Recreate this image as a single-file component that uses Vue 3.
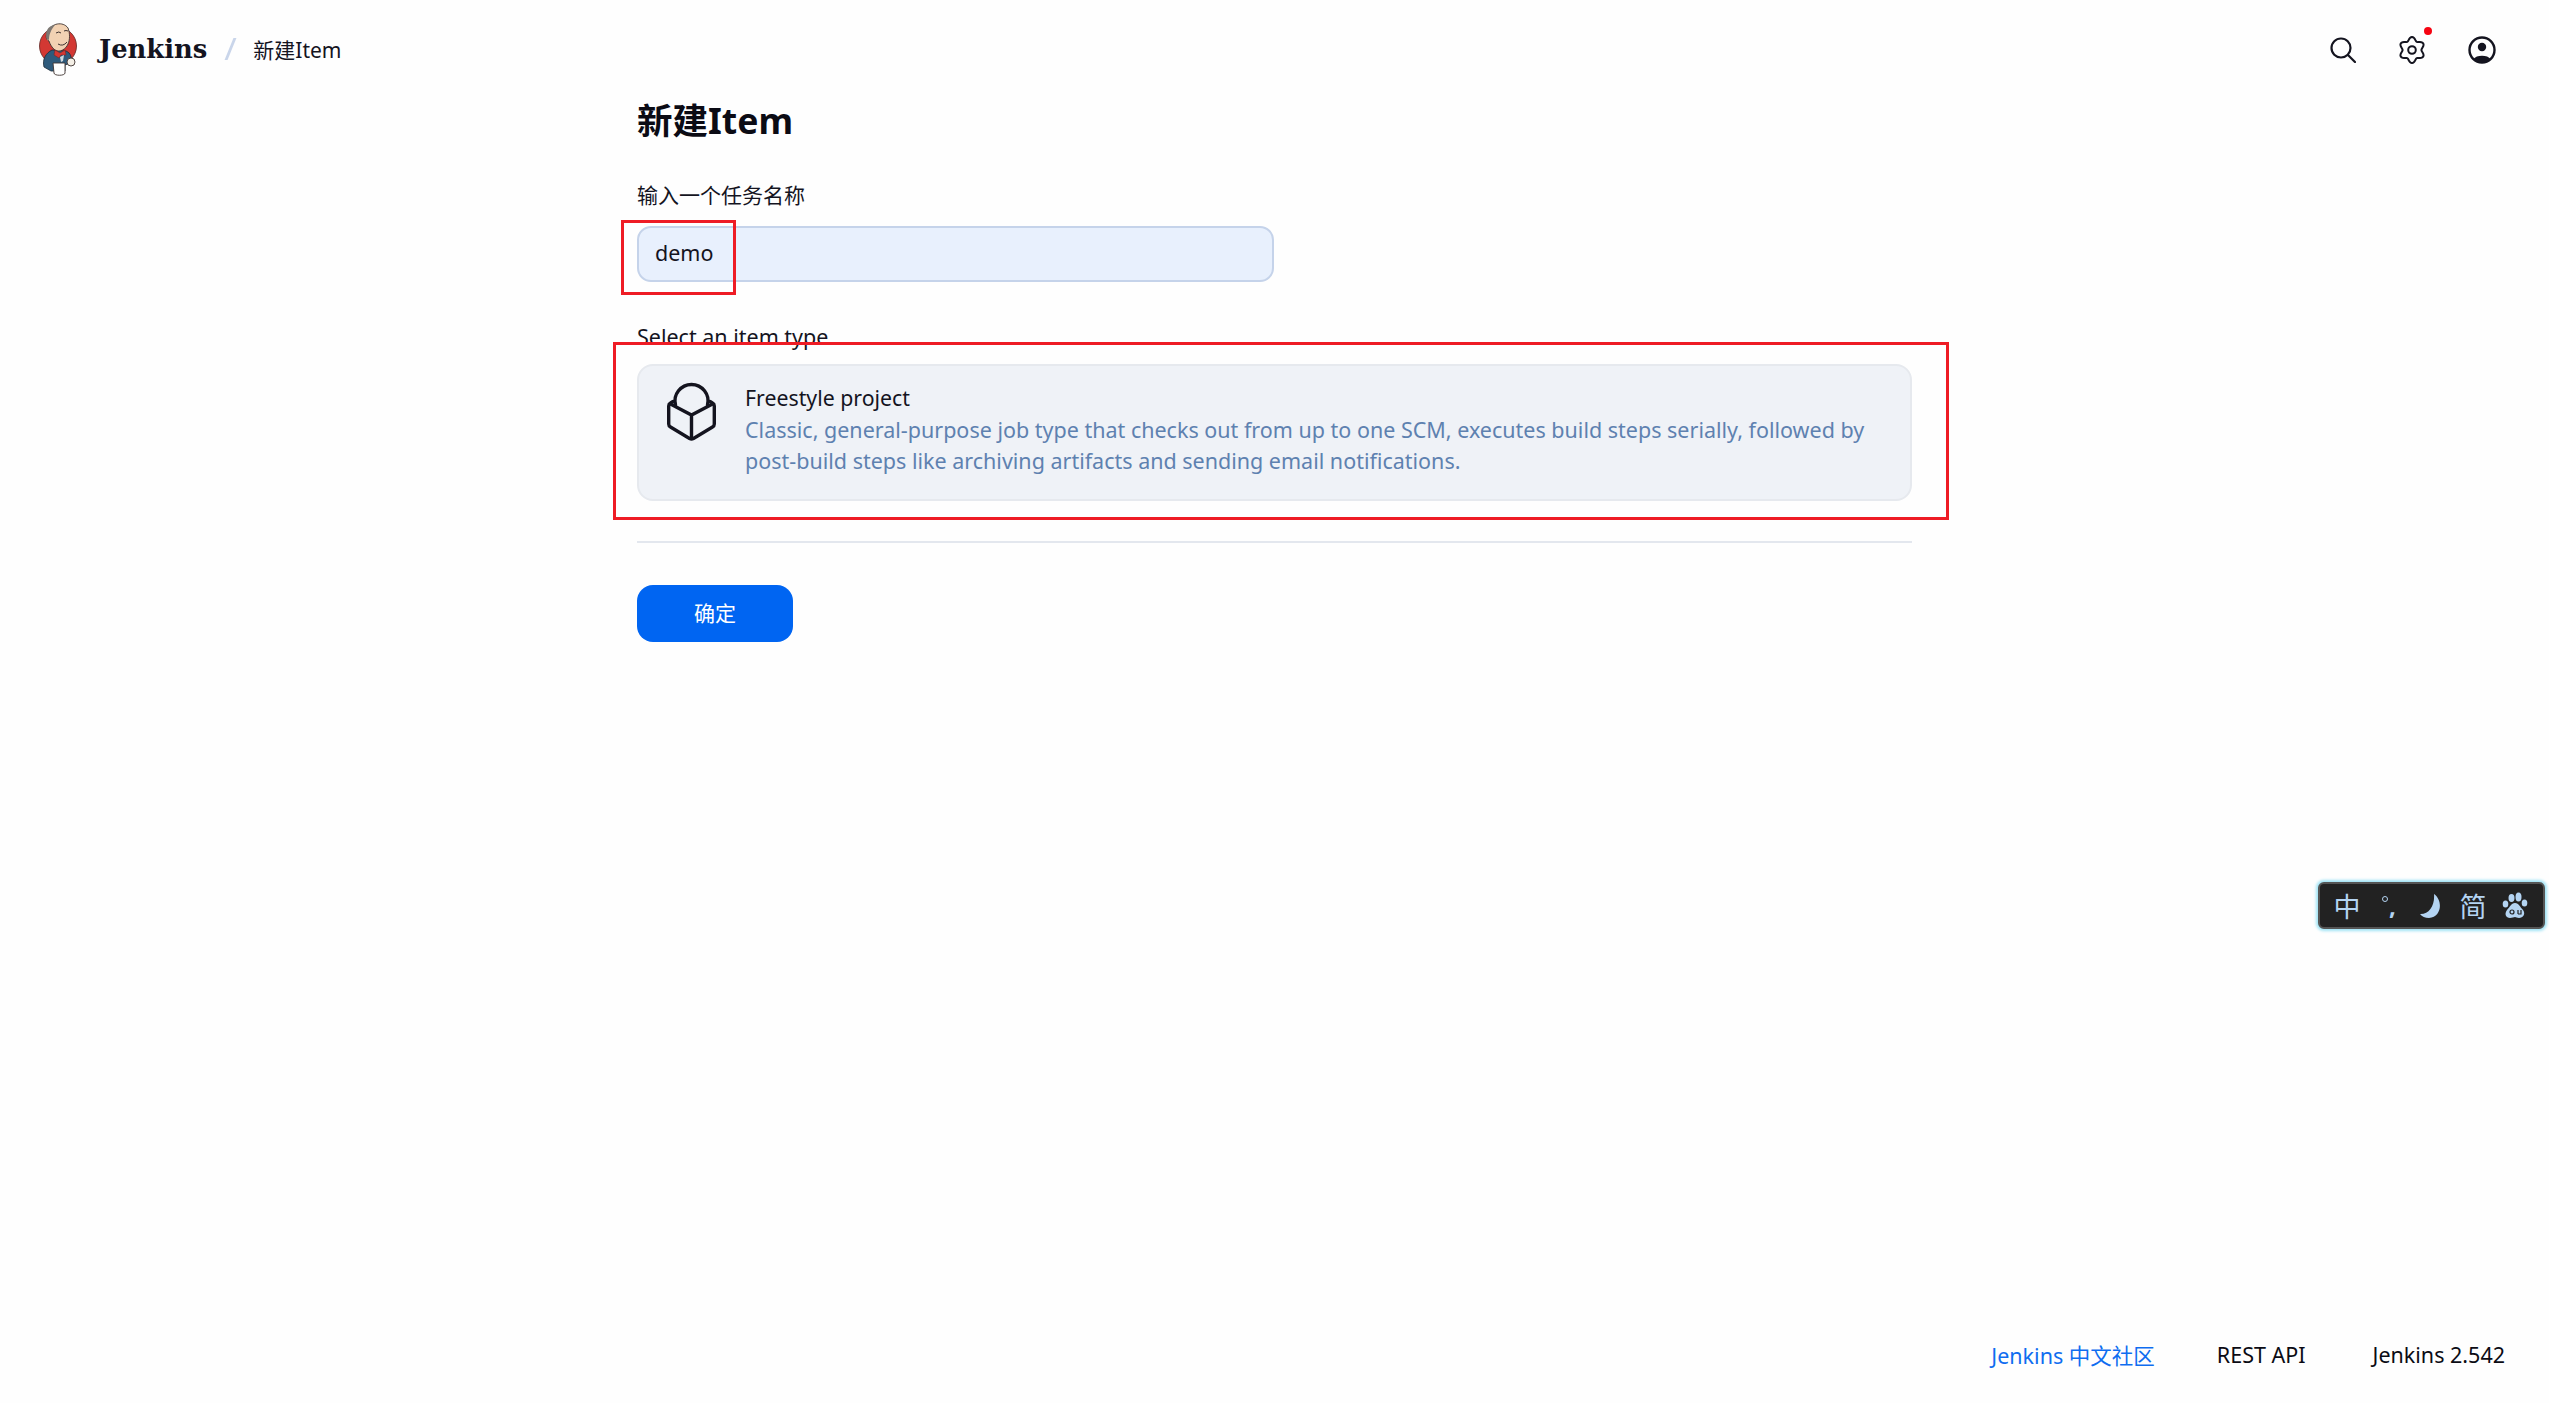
<template>
  <div class="page">
    <header class="topbar">
      <div class="crumbs">
        <svg class="logo" viewBox="0 0 40 54" width="40" height="54">
          <circle cx="20" cy="24" r="18.500" fill="#d33833" stroke="#5f2320" stroke-width="0.8" />
          <path d="M6 45 C4 37 8 31 14 28 L28 29 C33 31 34 36 33 41 L27 43 L27 49 L13 49 Z" fill="#2f5b7c" stroke="#1d2c38" stroke-width="0.8" />
          <path d="M10 10 C13 1 25 -1 30 6 C32 11 32 18 30 22 C28 27 22 31 17 28 C14 26 12 22 11 19 C8 18 7 13 10 10 Z" fill="#f2d2b3" stroke="#3f3431" stroke-width="0.9" />
          <path d="M13 4 C9 6 7 11 9 17 L11 18 C11 12 13 8 17 3 Z" fill="#7c7772" />
          <path d="M18 11 Q21 9 23 11 M26 9 Q28 8 30 9 M20 22 Q25 25 29 20" fill="none" stroke="#3f3431" stroke-width="1" />
          <path d="M17 28 L22 31 L27 28 L28 33 L23 33 L21 36 L16 33 Z" fill="#d33833" stroke="#7a1f1c" stroke-width="0.5" />
          <path d="M22 35 L26 33 L25 39 L23 40 Z" fill="#cfd8de" />
          <path d="M15 41 L27 41 L27 51 C27 54 16 54 16 51 Z" fill="#fff" stroke="#3f3431" stroke-width="0.9" />
          <circle cx="33" cy="40" r="4" fill="#f4efe6" stroke="#3f3431" stroke-width="0.9" />
        </svg>
        <span class="brand">Jenkins</span>
        <span class="slash"></span>
        <span class="crumb">新建Item</span>
      </div>
      <div class="actions">
        <svg class="icon" viewBox="0 0 26 26" width="26" height="26">
          <circle cx="11" cy="11" r="9.500" fill="none" stroke="#14141f" stroke-width="2.200" />
          <path d="M18 18 L25 25" stroke="#14141f" stroke-width="2.200" stroke-linecap="round" />
        </svg>
        <span class="gear-wrap">
          <svg class="icon" viewBox="0 0 28 28" width="28" height="28">
            <path :d="gearPath" fill="none" stroke="#14141f" stroke-width="2" stroke-linejoin="round" />
            <circle cx="14" cy="14" r="3.800" fill="none" stroke="#14141f" stroke-width="2" />
          </svg>
          <i class="dot"></i>
        </span>
        <svg class="icon" viewBox="0 0 28 28" width="28" height="28">
          <circle cx="14" cy="14" r="12.500" fill="none" stroke="#14141f" stroke-width="2.400" />
          <circle cx="14" cy="11" r="4.200" fill="#14141f" />
          <path d="M5.500 23 C8 18.500 20 18.500 22.500 23 C20 25.500 17 26.500 14 26.500 C11 26.500 8 25.500 5.500 23 Z" fill="#14141f" />
        </svg>
      </div>
    </header>

    <main class="content">
      <h1 class="title">新建Item</h1>
      <label class="field-label">输入一个任务名称</label>
      <div class="name-field">
        <input class="name-input" type="text" value="demo" readonly />
        <span class="mark mark-name"></span>
      </div>
      <p class="type-label">Select an item type</p>
      <div class="type-list">
        <div class="type-card">
          <svg class="type-icon" viewBox="0 0 49 59" width="49" height="59">
            <path d="M8.500 23 A16.500 16.500 0 1 1 40.500 23" fill="none" stroke="#14141f" stroke-width="3.400" stroke-linecap="round" />
            <path d="M6 19.500 L3.500 21 Q1.700 22 1.700 24 L1.700 42 Q1.700 44 3.500 45 L22.500 56.500 Q24.500 57.500 26.500 56.500 L45.500 45 Q47.300 44 47.300 42 L47.300 24 Q47.300 22 45.500 21 L43 19.500" fill="none" stroke="#14141f" stroke-width="3.400" stroke-linecap="round" />
            <path d="M3.500 22 L24.500 33 L45.500 22 M24.500 33 L24.500 56" fill="none" stroke="#14141f" stroke-width="3.400" stroke-linecap="round" />
          </svg>
          <div class="type-text">
            <div class="type-name">Freestyle project</div>
            <div class="type-desc">Classic, general-purpose job type that checks out from up to one SCM, executes build steps serially, followed by post-build steps like archiving artifacts and sending email notifications.</div>
          </div>
        </div>
        <span class="mark mark-type"></span>
      </div>
      <hr class="divider" />
      <button class="ok-btn" type="button">确定</button>
    </main>

    <footer class="footer">
      <a class="community">Jenkins 中文社区</a>
      <span class="rest">REST API</span>
      <span class="version">Jenkins 2.542</span>
    </footer>

    <div class="ime">
      <span class="ime-zh">中</span>
      <span class="ime-punc"><i class="ime-ring"></i>,</span>
      <svg viewBox="0 0 22 26" width="22" height="26">
        <path d="M14 1 C23 7 22 24 9 25 C5 25 2 23.500 0 21 C9 21.500 15 13 14 1 Z" fill="#b4d4f2" />
      </svg>
      <span class="ime-zh">简</span>
      <svg viewBox="0 0 26 28" width="26" height="28">
        <ellipse cx="3.500" cy="12" rx="2.800" ry="3.500" fill="#b4d4f2" />
        <ellipse cx="9.500" cy="6" rx="3" ry="4" fill="#b4d4f2" />
        <ellipse cx="16.500" cy="5" rx="3" ry="4.500" fill="#b4d4f2" />
        <ellipse cx="22.500" cy="11" rx="2.800" ry="3.500" fill="#b4d4f2" />
        <path d="M13 11 C17 11 18 15 21 18 C24 22 21 26 17 26 C15 26 14 25 13 25 C12 25 10 26 8 26 C4 26 2 22 5 18 C8 15 9 11 13 11 Z" fill="#b4d4f2" />
        <circle cx="10" cy="20" r="2" fill="none" stroke="#222" stroke-width="1.200" />
        <path d="M16 18 L16 22 M16 22 L19 22 L19 18" fill="none" stroke="#222" stroke-width="1.200" />
      </svg>
    </div>
  </div>
</template>

<script setup>
// gear outline: six lobes around the centre
const gearPoints = [];
for (let i = 0; i < 72; i++) {
  const a = (i / 72) * Math.PI * 2;
  const r = 11.2 + 1.8 * Math.cos(6 * a);
  const x = 14 + r * Math.sin(a);
  const y = 14 - r * Math.cos(a);
  gearPoints.push(`${x.toFixed(2)} ${y.toFixed(2)}`);
}
const gearPath = `M${gearPoints.join(' L')} Z`;
</script>

<style>
html, body {
  margin: 0;
  background: #fefefe;
}
</style>

<style scoped>
.page {
  position: relative;
  height: 1403px;
  display: flex;
  flex-direction: column;
  overflow: hidden;
  background: #fefefe;
  color: #14141f;
  font-family: "Noto Sans", "Noto Sans CJK SC", sans-serif;
}

.topbar {
  height: 98px;
  display: flex;
  align-items: center;
  justify-content: space-between;
  padding: 0 53px 0 38px;
  box-sizing: border-box;
  flex-shrink: 0;
}

.crumbs {
  display: flex;
  align-items: center;
}

.logo {
  margin-right: 21px;
}

.brand {
  font-family: "DejaVu Serif", serif;
  font-weight: 700;
  font-size: 25.800px;
  color: #14141f;
}

.slash {
  width: 3px;
  height: 22px;
  margin: 0 21px 0 22px;
  background: #c9d5ea;
  transform: skewX(-22deg);
}

.crumb {
  font-size: 21px;
}

.actions {
  display: flex;
  align-items: center;
  gap: 42px;
  margin-top: 1px;
}

.icon {
  display: block;
}

.gear-wrap {
  position: relative;
  display: block;
}

.dot {
  position: absolute;
  top: -9px;
  right: -6px;
  width: 8px;
  height: 8px;
  border-radius: 50%;
  background: #f60412;
}

.content {
  width: 1275px;
  margin: 0 auto;
  flex: 1;
}

.title {
  margin: 0;
  font-size: 35.500px;
  line-height: 44px;
  font-weight: 700;
  color: #0b0b14;
}

.field-label {
  display: block;
  margin-top: 38px;
  font-size: 21px;
  line-height: 30px;
}

.name-field {
  position: relative;
  width: 637px;
  margin-top: 16px;
}

.name-input {
  display: block;
  width: 100%;
  height: 56px;
  box-sizing: border-box;
  padding: 0 16px 3px;
  border: 2px solid #c5d3ea;
  border-radius: 14px;
  background: #e8f0fd;
  font: 21.500px "Noto Sans", sans-serif;
  color: #14141f;
  outline: none;
}

.mark {
  position: absolute;
  box-sizing: border-box;
  border: 3px solid #ee1c25;
  pointer-events: none;
}

.mark-name {
  left: -16px;
  top: -6px;
  width: 115px;
  height: 75px;
}

.type-label {
  margin: 0;
  padding-top: 40px;
  font-size: 21.500px;
  line-height: 30px;
}

.type-list {
  position: relative;
  margin-top: 12px;
}

.type-card {
  display: flex;
  box-sizing: border-box;
  height: 137px;
  padding: 16px 20px 17px 0;
  border: 2px solid #e6e9ee;
  border-radius: 16px;
  background: #eff2f7;
}

.type-icon {
  flex-shrink: 0;
  margin: 0 29px 0 28px;
}

.type-name {
  font-size: 21.300px;
  line-height: 32px;
}

.type-desc {
  font-size: 21.500px;
  line-height: 31px;
  color: #5e81b0;
}

.mark-type {
  left: -24px;
  top: -22px;
  width: 1336px;
  height: 178px;
}

.divider {
  height: 2px;
  margin: 40px 0 0;
  border: 0;
  background: #e3e7ee;
}

.ok-btn {
  display: block;
  width: 156px;
  height: 57px;
  margin-top: 42px;
  padding: 0 0 3px;
  border: 0;
  border-radius: 16px;
  background: #0065f2;
  color: #fff;
  font: 21px "Noto Sans", "Noto Sans CJK SC", sans-serif;
}

.footer {
  height: 98px;
  flex-shrink: 0;
  display: flex;
  justify-content: flex-end;
  align-items: center;
  gap: 62px;
  padding: 0 44px 0 0;
  font-size: 21.500px;
  box-sizing: border-box;
  color: #0b0b14;
}

.community {
  color: #0f6df0;
}

.rest {
  margin-right: 5px;
}

.ime {
  position: absolute;
  left: 2318px;
  top: 882px;
  width: 227px;
  height: 47px;
  box-sizing: border-box;
  display: grid;
  grid-template-columns: repeat(5, 42px);
  justify-items: center;
  align-items: center;
  padding-left: 6px;
  background: #222;
  border: 2px solid #555;
  border-radius: 6px;
  box-shadow: 0 0 3px 2px #9fe3f5;
  color: #b4d4f2;
}

.ime-zh {
  font-size: 27px;
  line-height: 34px;
  font-family: "Noto Sans CJK SC", sans-serif;
}

.ime-punc {
  display: flex;
  align-items: flex-start;
  font-size: 24px;
  line-height: 32px;
  font-weight: 700;
}

.ime-ring {
  width: 4px;
  height: 4px;
  margin: 6px 1px 0 0;
  border: 1.500px solid #b4d4f2;
  border-radius: 50%;
}
</style>
